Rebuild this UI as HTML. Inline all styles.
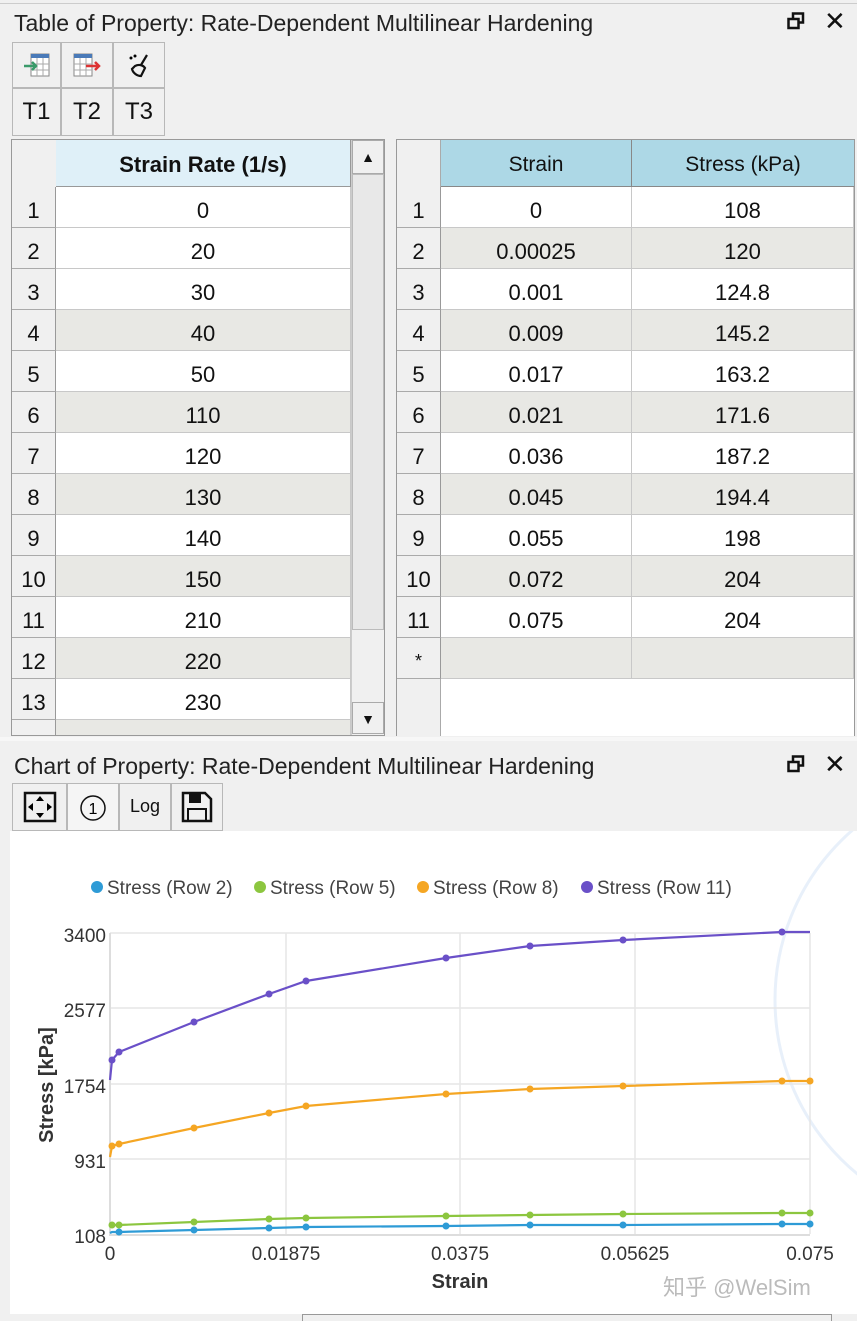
<!DOCTYPE html>
<html><head><meta charset="utf-8"><style>
*{margin:0;padding:0;box-sizing:border-box}
body{width:857px;height:1321px;background:#f0f0f0;font-family:"Liberation Sans",sans-serif;position:relative;overflow:hidden;color:#111}
.a{position:absolute}
.t{font-size:23px;color:#222}
.btn{position:absolute;background:#f0f0f0;border:1px solid #b8b8b8;display:flex;align-items:center;justify-content:center;font-size:24px}
.c{position:absolute;height:41px;display:flex;align-items:center;justify-content:center;font-size:22px;padding-top:7px;border-right:1px solid #c8c8c8;border-bottom:1px solid #c8c8c8}
.n{background:#f0f0f0;border-right:1px solid #999;border-bottom:1px solid #aaa}
.g{background:#e8e8e4}
.w{background:#fff}
</style></head><body>
<div class="a" style="left:0;top:0;width:857px;height:4px;border-bottom:1px solid #ccc"></div>
<div class="a t" style="left:14px;top:10px">Table of Property: Rate-Dependent Multilinear Hardening</div>
<svg class="a" style="left:787px;top:12px" width="18" height="18"><rect x="6" y="1.5" width="10" height="9" fill="none" stroke="#111" stroke-width="2.5"/><rect x="1.5" y="7" width="10" height="9" fill="#f0f0f0" stroke="#111" stroke-width="2.5"/></svg>
<div class="a" style="left:824px;top:6px;font-size:26px">✕</div>
<div class="btn" style="left:12px;top:42px;width:49px;height:46px"><svg width="28" height="26"><rect x="8" y="2" width="18" height="22" fill="#fff" stroke="#888"/><rect x="8" y="2" width="18" height="4" fill="#4a7ab8"/><path d="M8 12h18M8 18h18M14 6v18M20 6v18" stroke="#aaa"/><path d="M1 14h12M9 10l4 4-4 4" stroke="#3a9a6a" stroke-width="2.5" fill="none"/></svg></div>
<div class="btn" style="left:61px;top:42px;width:52px;height:46px"><svg width="30" height="26"><rect x="2" y="2" width="18" height="22" fill="#fff" stroke="#888"/><rect x="2" y="2" width="18" height="4" fill="#4a7ab8"/><path d="M2 12h18M2 18h18M8 6v18M14 6v18" stroke="#aaa"/><path d="M14 14h13M23 10l4 4-4 4" stroke="#d33" stroke-width="2.5" fill="none"/></svg></div>
<div class="btn" style="left:113px;top:42px;width:52px;height:46px"><svg width="28" height="26"><path d="M22 3l-6 10M10 14c4-2 8-1 10 2l-4 8c-4 0-8-3-9-7z" stroke="#111" stroke-width="2.2" fill="none"/><circle cx="6" cy="6" r="1.5"/><circle cx="10" cy="4" r="1.5"/></svg></div>
<div class="btn" style="left:12px;top:88px;width:49px;height:48px">T1</div>
<div class="btn" style="left:61px;top:88px;width:52px;height:48px">T2</div>
<div class="btn" style="left:113px;top:88px;width:52px;height:48px">T3</div>

<div class="a" style="left:11px;top:139px;width:374px;height:597px;border:1px solid #999;background:#f0f0f0;overflow:hidden">
<div class="a" style="left:44px;top:0;width:295px;height:47px;background:#dff0f8;border-right:1px solid #999;border-bottom:1px solid #999;display:flex;align-items:center;justify-content:center;font-weight:bold;font-size:22px;padding-top:4px">Strain Rate (1/s)</div>
<div class="c n" style="left:0;top:47px;width:44px">1</div><div class="c w" style="left:44px;top:47px;width:295px">0</div>
<div class="c n" style="left:0;top:88px;width:44px">2</div><div class="c w" style="left:44px;top:88px;width:295px">20</div>
<div class="c n" style="left:0;top:129px;width:44px">3</div><div class="c w" style="left:44px;top:129px;width:295px">30</div>
<div class="c n" style="left:0;top:170px;width:44px">4</div><div class="c g" style="left:44px;top:170px;width:295px">40</div>
<div class="c n" style="left:0;top:211px;width:44px">5</div><div class="c w" style="left:44px;top:211px;width:295px">50</div>
<div class="c n" style="left:0;top:252px;width:44px">6</div><div class="c g" style="left:44px;top:252px;width:295px">110</div>
<div class="c n" style="left:0;top:293px;width:44px">7</div><div class="c w" style="left:44px;top:293px;width:295px">120</div>
<div class="c n" style="left:0;top:334px;width:44px">8</div><div class="c g" style="left:44px;top:334px;width:295px">130</div>
<div class="c n" style="left:0;top:375px;width:44px">9</div><div class="c w" style="left:44px;top:375px;width:295px">140</div>
<div class="c n" style="left:0;top:416px;width:44px">10</div><div class="c g" style="left:44px;top:416px;width:295px">150</div>
<div class="c n" style="left:0;top:457px;width:44px">11</div><div class="c w" style="left:44px;top:457px;width:295px">210</div>
<div class="c n" style="left:0;top:498px;width:44px">12</div><div class="c g" style="left:44px;top:498px;width:295px">220</div>
<div class="c n" style="left:0;top:539px;width:44px">13</div><div class="c w" style="left:44px;top:539px;width:295px">230</div>
<div class="c n" style="left:0;top:580px;width:44px">14</div><div class="c g" style="left:44px;top:580px;width:295px">240</div>
<div class="a" style="left:339px;top:0;width:34px;height:597px;background:#f0f0f0;border-left:1px solid #ccc"></div>
<div class="a" style="left:340px;top:0;width:32px;height:34px;border:1px solid #aaa;background:#f0f0f0;font-size:14px;text-align:center;line-height:32px">▲</div>
<div class="a" style="left:340px;top:34px;width:32px;height:456px;border:1px solid #bbb;background:#e8e8e8"></div>
<div class="a" style="left:340px;top:562px;width:32px;height:32px;border:1px solid #aaa;background:#f0f0f0;font-size:14px;text-align:center;line-height:32px">▼</div>
</div>

<div class="a" style="left:396px;top:139px;width:459px;height:597px;border:1px solid #999;border-bottom:none;background:#fff;overflow:hidden">
<div class="a" style="left:0;top:0;width:44px;height:597px;background:#f0f0f0;border-right:1px solid #aaa"></div>
<div class="a" style="left:44px;top:0;width:191px;height:47px;background:#add8e6;border-right:1px solid #888;border-bottom:1px solid #888;display:flex;align-items:center;justify-content:center;font-size:21px;padding-top:4px">Strain</div>
<div class="a" style="left:235px;top:0;width:222px;height:47px;background:#add8e6;border-bottom:1px solid #888;display:flex;align-items:center;justify-content:center;font-size:21px;padding-top:4px">Stress (kPa)</div>
<div class="c n" style="left:0;top:47px;width:44px">1</div><div class="c w" style="left:44px;top:47px;width:191px">0</div><div class="c w" style="left:235px;top:47px;width:222px">108</div>
<div class="c n" style="left:0;top:88px;width:44px">2</div><div class="c g" style="left:44px;top:88px;width:191px">0.00025</div><div class="c g" style="left:235px;top:88px;width:222px">120</div>
<div class="c n" style="left:0;top:129px;width:44px">3</div><div class="c w" style="left:44px;top:129px;width:191px">0.001</div><div class="c w" style="left:235px;top:129px;width:222px">124.8</div>
<div class="c n" style="left:0;top:170px;width:44px">4</div><div class="c g" style="left:44px;top:170px;width:191px">0.009</div><div class="c g" style="left:235px;top:170px;width:222px">145.2</div>
<div class="c n" style="left:0;top:211px;width:44px">5</div><div class="c w" style="left:44px;top:211px;width:191px">0.017</div><div class="c w" style="left:235px;top:211px;width:222px">163.2</div>
<div class="c n" style="left:0;top:252px;width:44px">6</div><div class="c g" style="left:44px;top:252px;width:191px">0.021</div><div class="c g" style="left:235px;top:252px;width:222px">171.6</div>
<div class="c n" style="left:0;top:293px;width:44px">7</div><div class="c w" style="left:44px;top:293px;width:191px">0.036</div><div class="c w" style="left:235px;top:293px;width:222px">187.2</div>
<div class="c n" style="left:0;top:334px;width:44px">8</div><div class="c g" style="left:44px;top:334px;width:191px">0.045</div><div class="c g" style="left:235px;top:334px;width:222px">194.4</div>
<div class="c n" style="left:0;top:375px;width:44px">9</div><div class="c w" style="left:44px;top:375px;width:191px">0.055</div><div class="c w" style="left:235px;top:375px;width:222px">198</div>
<div class="c n" style="left:0;top:416px;width:44px">10</div><div class="c g" style="left:44px;top:416px;width:191px">0.072</div><div class="c g" style="left:235px;top:416px;width:222px">204</div>
<div class="c n" style="left:0;top:457px;width:44px">11</div><div class="c w" style="left:44px;top:457px;width:191px">0.075</div><div class="c w" style="left:235px;top:457px;width:222px">204</div>
<div class="c n" style="left:0;top:498px;width:44px;font-size:18px">*</div><div class="c g" style="left:44px;top:498px;width:191px"></div><div class="c g" style="left:235px;top:498px;width:222px"></div>
</div>

<div class="a" style="left:0;top:737px;width:857px;height:4px;background:#f7f7f7"></div>
<div class="a t" style="left:14px;top:753px">Chart of Property: Rate-Dependent Multilinear Hardening</div>
<svg class="a" style="left:787px;top:755px" width="18" height="18"><rect x="6" y="1.5" width="10" height="9" fill="none" stroke="#111" stroke-width="2.5"/><rect x="1.5" y="7" width="10" height="9" fill="#f0f0f0" stroke="#111" stroke-width="2.5"/></svg>
<div class="a" style="left:824px;top:749px;font-size:26px">✕</div>
<div class="btn" style="left:12px;top:783px;width:55px;height:48px"><svg width="34" height="32"><rect x="2" y="2" width="30" height="28" fill="none" stroke="#111" stroke-width="2.5"/><path d="M17 5l-4 5h8zM17 27l-4-5h8zM5 16l5-4v8zM29 16l-5-4v8z"/></svg></div>
<div class="btn" style="left:67px;top:783px;width:52px;height:48px;background:#f5f5f5"><svg width="30" height="30"><circle cx="15" cy="16" r="12" fill="none" stroke="#111" stroke-width="1.5"/><text x="15" y="22" font-size="16" text-anchor="middle" font-family="Liberation Sans">1</text></svg></div>
<div class="btn" style="left:119px;top:783px;width:52px;height:48px;font-size:18px;align-items:flex-start;padding-top:12px">Log</div>
<div class="btn" style="left:171px;top:783px;width:52px;height:48px"><svg width="32" height="32"><path d="M2 2h22l6 6v22H2z" fill="none" stroke="#111" stroke-width="2.5"/><rect x="8" y="2" width="12" height="10" fill="#111"/><rect x="7" y="18" width="18" height="12" fill="none" stroke="#111" stroke-width="2"/></svg></div>
<div class="a" style="left:10px;top:831px;width:847px;height:483px;background:#fff"></div>
<svg class="a" style="left:0;top:831px" width="857" height="490" viewBox="0 831 857 490" font-family="Liberation Sans">
<circle cx="1000" cy="1000" r="225" fill="none" stroke="#e8f0fa" stroke-width="3"/>
<g font-size="19" fill="#444">
<circle cx="97" cy="887" r="6" fill="#2e9bd6"/><text x="107" y="894">Stress (Row 2)</text>
<circle cx="260" cy="887" r="6" fill="#8cc63f"/><text x="270" y="894">Stress (Row 5)</text>
<circle cx="423" cy="887" r="6" fill="#f5a623"/><text x="433" y="894">Stress (Row 8)</text>
<circle cx="587" cy="887" r="6" fill="#6a50c8"/><text x="597" y="894">Stress (Row 11)</text>
</g>
<g stroke="#e6e6e6" stroke-width="1.5">
<path d="M110 933H810M110 1008H810M110 1084H810M110 1159H810M286 933V1234M460 933V1234M635 933V1234M810 933V1234"/>
</g>
<path d="M110 933V1235H810" stroke="#ddd" stroke-width="2" fill="none"/>
<g font-size="19" fill="#333" text-anchor="end">
<text x="106" y="942">3400</text><text x="106" y="1017">2577</text><text x="106" y="1093">1754</text><text x="106" y="1168">931</text><text x="106" y="1243">108</text>
</g>
<g font-size="19" fill="#333" text-anchor="middle">
<text x="110" y="1260">0</text><text x="286" y="1260">0.01875</text><text x="460" y="1260">0.0375</text><text x="635" y="1260">0.05625</text><text x="810" y="1260">0.075</text>
</g>
<text x="460" y="1288" font-size="20" font-weight="bold" fill="#333" text-anchor="middle">Strain</text>
<text transform="translate(53,1085) rotate(-90)" font-size="20" font-weight="bold" fill="#333" text-anchor="middle">Stress [kPa]</text>
<g fill="none" stroke-width="2.2">
<polyline stroke="#6a50c8" points="110,1080 112,1060 119,1052 194,1022 269,994 306,981 446,958 530,946 623,940 782,932 810,932"/>
<polyline stroke="#f5a623" points="110,1157 112,1146 119,1144 194,1128 269,1113 306,1106 446,1094 530,1089 623,1086 782,1081 810,1081"/>
<polyline stroke="#8cc63f" points="110,1226 112,1225 119,1225 194,1222 269,1219 306,1218 446,1216 530,1215 623,1214 782,1213 810,1213"/>
<polyline stroke="#2e9bd6" points="110,1233 112,1232 119,1232 194,1230 269,1228 306,1227 446,1226 530,1225 623,1225 782,1224 810,1224"/>
</g>
<g fill="#6a50c8"><circle cx="112" cy="1060" r="3.5"/><circle cx="119" cy="1052" r="3.5"/><circle cx="194" cy="1022" r="3.5"/><circle cx="269" cy="994" r="3.5"/><circle cx="306" cy="981" r="3.5"/><circle cx="446" cy="958" r="3.5"/><circle cx="530" cy="946" r="3.5"/><circle cx="623" cy="940" r="3.5"/><circle cx="782" cy="932" r="3.5"/></g>
<g fill="#f5a623"><circle cx="112" cy="1146" r="3.5"/><circle cx="119" cy="1144" r="3.5"/><circle cx="194" cy="1128" r="3.5"/><circle cx="269" cy="1113" r="3.5"/><circle cx="306" cy="1106" r="3.5"/><circle cx="446" cy="1094" r="3.5"/><circle cx="530" cy="1089" r="3.5"/><circle cx="623" cy="1086" r="3.5"/><circle cx="782" cy="1081" r="3.5"/><circle cx="810" cy="1081" r="3.5"/></g>
<g fill="#8cc63f"><circle cx="112" cy="1225" r="3.5"/><circle cx="119" cy="1225" r="3.5"/><circle cx="194" cy="1222" r="3.5"/><circle cx="269" cy="1219" r="3.5"/><circle cx="306" cy="1218" r="3.5"/><circle cx="446" cy="1216" r="3.5"/><circle cx="530" cy="1215" r="3.5"/><circle cx="623" cy="1214" r="3.5"/><circle cx="782" cy="1213" r="3.5"/><circle cx="810" cy="1213" r="3.5"/></g>
<g fill="#2e9bd6"><circle cx="119" cy="1232" r="3.5"/><circle cx="194" cy="1230" r="3.5"/><circle cx="269" cy="1228" r="3.5"/><circle cx="306" cy="1227" r="3.5"/><circle cx="446" cy="1226" r="3.5"/><circle cx="530" cy="1225" r="3.5"/><circle cx="623" cy="1225" r="3.5"/><circle cx="782" cy="1224" r="3.5"/><circle cx="810" cy="1224" r="3.5"/></g>
<text x="663" y="1295" font-size="22" fill="#bbb" font-family="Liberation Sans, Noto Sans CJK SC, sans-serif">知乎 @WelSim</text>
</svg>
<div class="a" style="left:302px;top:1314px;width:530px;height:7px;border:1px solid #999;border-bottom:none;background:#f0f0f0"></div>
</body></html>
